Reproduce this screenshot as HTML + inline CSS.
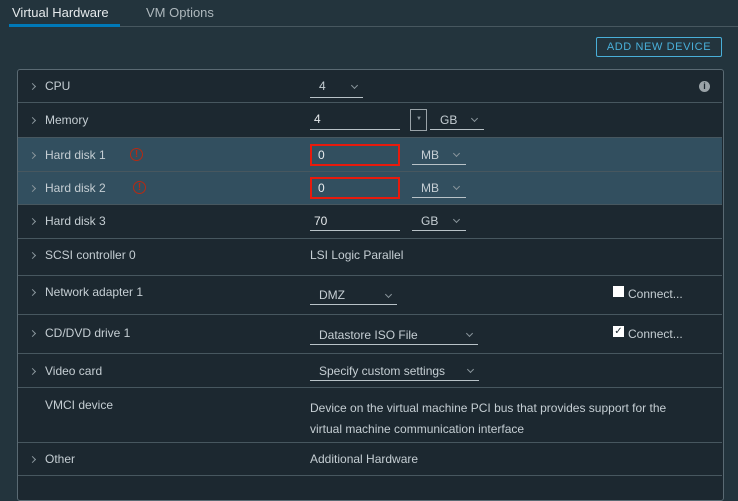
<!DOCTYPE html>
<html><head><style>
body{margin:0;width:738px;height:491px;background:#23343d;font-family:"Liberation Sans",sans-serif;font-size:12px;color:#c5ced3;position:relative;overflow:hidden}
.a{position:absolute}
.tab{top:5px;font-size:13px}
.row{position:absolute;left:18px;width:704px;border-bottom:1px solid #47575f}
.lbl{position:absolute;left:27px}
.chev{position:absolute;left:12px;width:4px;height:4px;border-right:1.5px solid #8a969c;border-top:1.5px solid #8a969c;transform:rotate(45deg)}
.ul{position:absolute;border-bottom:1px solid #b8c2c7}
.dd{position:absolute;width:4px;height:4px;border-right:1px solid #8a969c;border-bottom:1px solid #8a969c;transform:rotate(45deg)}
.err{position:absolute;width:11px;height:11px;border:1.5px solid #b62a13;border-radius:50%;color:#b62a13;font-size:10px;font-weight:bold;text-align:center;line-height:11px}
.red{position:absolute;border:2px solid #e81a0c;width:90px;height:22px;box-sizing:border-box}
</style></head><body>
<div class="a tab" style="left:12px;color:#e6eaec">Virtual Hardware</div>
<div class="a tab" style="left:146px;color:#aeb8bd">VM Options</div>
<div class="a" style="left:9px;top:24px;width:111px;height:3px;background:#0079b8"></div>
<div class="a" style="left:120px;top:26px;width:618px;height:1px;background:#47575f"></div>
<div class="a" style="left:596px;top:37px;width:124px;height:18px;border:1px solid #49afd9;border-radius:2px;color:#49afd9;font-size:11px;letter-spacing:0.6px;text-align:center;line-height:18px">ADD NEW DEVICE</div>
<div class="a" style="left:17px;top:69px;width:705px;height:430px;border:1px solid #5a6a73;border-radius:3px;background:#1c2830"></div>

<div class="row" style="top:70px;height:32px"><span class="chev" style="top:14px"></span><span class="lbl" style="top:9px">CPU</span></div>
<div class="a" style="left:319px;top:79px">4</div><div class="ul" style="left:310px;top:84px;width:53px;height:13px"></div><div class="dd" style="left:352px;top:83px"></div>
<div class="a" style="left:699px;top:81px;width:11px;height:11px;border-radius:50%;background:#9aa3a8;color:#1c2830;font-size:9px;font-weight:bold;text-align:center;line-height:11px">i</div>

<div class="row" style="top:103px;height:34px"><span class="chev" style="top:15px"></span><span class="lbl" style="top:10px">Memory</span></div>
<div class="a" style="left:314px;top:112px;color:#e6eaec">4</div><div class="ul" style="left:310px;top:116px;width:90px;height:13px"></div>
<div class="a" style="left:410px;top:109px;width:17px;height:22px;border:1px solid #9aa3a8;box-sizing:border-box"></div><div class="a" style="left:416px;top:116px;color:#8a969c;font-size:6px">&#9660;</div>
<div class="a" style="left:440px;top:113px">GB</div><div class="ul" style="left:430px;top:116px;width:54px;height:13px"></div><div class="dd" style="left:472px;top:116px"></div>

<div class="row" style="top:138px;height:33px;background:#324f5f"><span class="chev" style="top:15px"></span><span class="lbl" style="top:10px">Hard disk 1</span></div>
<div class="err" style="left:130px;top:148px">!</div>
<div class="red" style="left:310px;top:144px"></div><div class="a" style="left:318px;top:148px;color:#e6eaec">0</div>
<div class="a" style="left:421px;top:148px">MB</div><div class="ul" style="left:412px;top:151px;width:54px;height:13px"></div><div class="dd" style="left:454px;top:151px"></div>

<div class="row" style="top:172px;height:32px;background:#324f5f"><span class="chev" style="top:14px"></span><span class="lbl" style="top:9px">Hard disk 2</span></div>
<div class="err" style="left:133px;top:181px">!</div>
<div class="red" style="left:310px;top:177px"></div><div class="a" style="left:318px;top:181px;color:#e6eaec">0</div>
<div class="a" style="left:421px;top:181px">MB</div><div class="ul" style="left:412px;top:184px;width:54px;height:13px"></div><div class="dd" style="left:454px;top:184px"></div>

<div class="row" style="top:205px;height:33px"><span class="chev" style="top:14px"></span><span class="lbl" style="top:9px">Hard disk 3</span></div>
<div class="a" style="left:314px;top:214px;color:#e6eaec">70</div><div class="ul" style="left:310px;top:217px;width:90px;height:13px"></div>
<div class="a" style="left:421px;top:214px">GB</div><div class="ul" style="left:412px;top:217px;width:54px;height:13px"></div><div class="dd" style="left:454px;top:217px"></div>

<div class="row" style="top:239px;height:36px"><span class="chev" style="top:14px"></span><span class="lbl" style="top:9px">SCSI controller 0</span></div>
<div class="a" style="left:310px;top:248px">LSI Logic Parallel</div>

<div class="row" style="top:276px;height:38px"><span class="chev" style="top:14px"></span><span class="lbl" style="top:9px">Network adapter 1</span></div>
<div class="a" style="left:319px;top:288px">DMZ</div><div class="ul" style="left:310px;top:291px;width:87px;height:13px"></div><div class="dd" style="left:386px;top:292px"></div>
<div class="a" style="left:613px;top:286px;width:11px;height:11px;background:#fff"></div><div class="a" style="left:628px;top:287px">Connect...</div>

<div class="row" style="top:315px;height:38px"><span class="chev" style="top:16px"></span><span class="lbl" style="top:11px">CD/DVD drive 1</span></div>
<div class="a" style="left:319px;top:328px">Datastore ISO File</div><div class="ul" style="left:310px;top:331px;width:168px;height:13px"></div><div class="dd" style="left:467px;top:331px"></div>
<div class="a" style="left:613px;top:326px;width:11px;height:11px;background:#fff;color:#1c2830;font-size:10px;line-height:11px;text-align:center">&#10003;</div><div class="a" style="left:628px;top:327px">Connect...</div>

<div class="row" style="top:354px;height:33px"><span class="chev" style="top:15px"></span><span class="lbl" style="top:10px">Video card</span></div>
<div class="a" style="left:319px;top:364px">Specify custom settings</div><div class="ul" style="left:310px;top:367px;width:169px;height:13px"></div><div class="dd" style="left:468px;top:367px"></div>

<div class="row" style="top:388px;height:54px"><span class="lbl" style="top:10px">VMCI device</span></div>
<div class="a" style="left:310px;top:398px;line-height:21px;width:380px">Device on the virtual machine PCI bus that provides support for the virtual machine communication interface</div>

<div class="row" style="top:443px;height:32px"><span class="chev" style="top:14px"></span><span class="lbl" style="top:9px">Other</span></div>
<div class="a" style="left:310px;top:452px">Additional Hardware</div>
</body></html>
